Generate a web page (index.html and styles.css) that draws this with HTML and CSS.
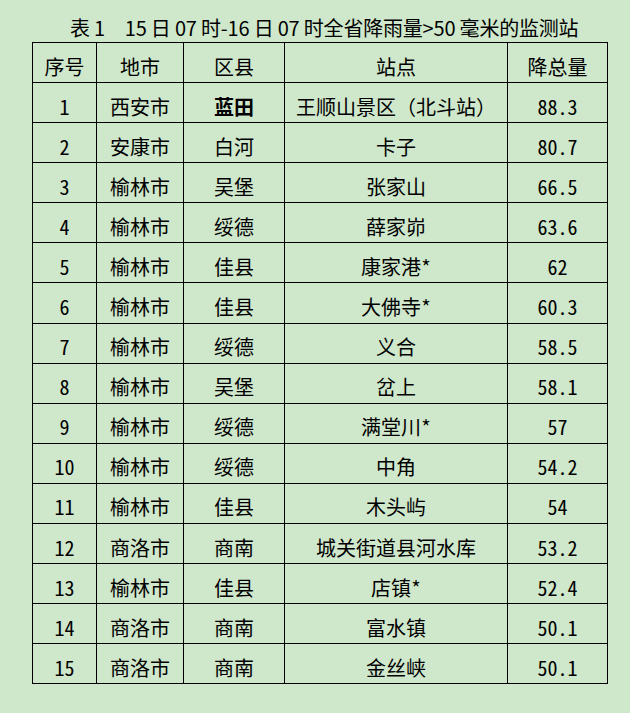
FILE: index.html
```html
<!DOCTYPE html>
<html lang="zh-CN">
<head>
<meta charset="utf-8">
<title>降雨量监测站</title>
<link rel="stylesheet" href="styles.css">
</head>
<body>
<div class="page">
  <div class="caption">表 1　15 日 07 时-16 日 07 时全省降雨量&gt;50 毫米的监测站</div>
  <table class="rain">
    <colgroup>
      <col class="c1"><col class="c2"><col class="c3"><col class="c4"><col class="c5">
    </colgroup>
    <thead>
      <tr><th>序号</th><th>地市</th><th>区县</th><th>站点</th><th>降总量</th></tr>
    </thead>
    <tbody>
      <tr><td>1</td><td>西安市</td><td class="bold">蓝田</td><td>王顺山景区（北斗站）</td><td>88.3</td></tr>
      <tr><td>2</td><td>安康市</td><td>白河</td><td>卡子</td><td>80.7</td></tr>
      <tr><td>3</td><td>榆林市</td><td>吴堡</td><td>张家山</td><td>66.5</td></tr>
      <tr><td>4</td><td>榆林市</td><td>绥德</td><td>薛家峁</td><td>63.6</td></tr>
      <tr><td>5</td><td>榆林市</td><td>佳县</td><td>康家港*</td><td>62</td></tr>
      <tr><td>6</td><td>榆林市</td><td>佳县</td><td>大佛寺*</td><td>60.3</td></tr>
      <tr><td>7</td><td>榆林市</td><td>绥德</td><td>义合</td><td>58.5</td></tr>
      <tr><td>8</td><td>榆林市</td><td>吴堡</td><td>岔上</td><td>58.1</td></tr>
      <tr><td>9</td><td>榆林市</td><td>绥德</td><td>满堂川*</td><td>57</td></tr>
      <tr><td>10</td><td>榆林市</td><td>绥德</td><td>中角</td><td>54.2</td></tr>
      <tr><td>11</td><td>榆林市</td><td>佳县</td><td>木头屿</td><td>54</td></tr>
      <tr><td>12</td><td>商洛市</td><td>商南</td><td>城关街道县河水库</td><td>53.2</td></tr>
      <tr><td>13</td><td>榆林市</td><td>佳县</td><td>店镇*</td><td>52.4</td></tr>
      <tr><td>14</td><td>商洛市</td><td>商南</td><td>富水镇</td><td>50.1</td></tr>
      <tr><td>15</td><td>商洛市</td><td>商南</td><td>金丝峡</td><td>50.1</td></tr>
    </tbody>
  </table>
</div>
</body>
</html>
```

FILE: styles.css
```css
html, body {
  margin: 0;
  padding: 0;
  background: #cfe7cb;
}
body {
  width: 630px;
  height: 713px;
  color: #000;
  font-family: "Noto Sans Mono CJK SC", "Noto Sans CJK SC", sans-serif;
}
.page {
  padding: 14px 0 0 32px;
}
.caption {
  width: 574px;
  box-sizing: border-box;
  padding-left: 38px;
  font-family: "Noto Sans CJK SC", sans-serif;
  font-size: 20px;
  letter-spacing: -0.2px;
  line-height: 28px;
  height: 28px;
  white-space: nowrap;
}
.rain {
  border-collapse: collapse;
  width: 575px;
  table-layout: fixed;
  font-size: 20px;
}
.c1 { width: 64px; }
.c2 { width: 87px; }
.c3 { width: 101px; }
.c4 { width: 223px; }
.c5 { width: 100px; }
.rain th, .rain td {
  border: 1px solid #000;
  text-align: center;
  font-weight: normal;
  padding: 8px 0 0 0;
  line-height: 26px;
  box-sizing: border-box;
  white-space: nowrap;
}
.rain th { height: 40px; }
.rain td { height: 40.1px; }
.rain td.bold { font-weight: bold; }
```
